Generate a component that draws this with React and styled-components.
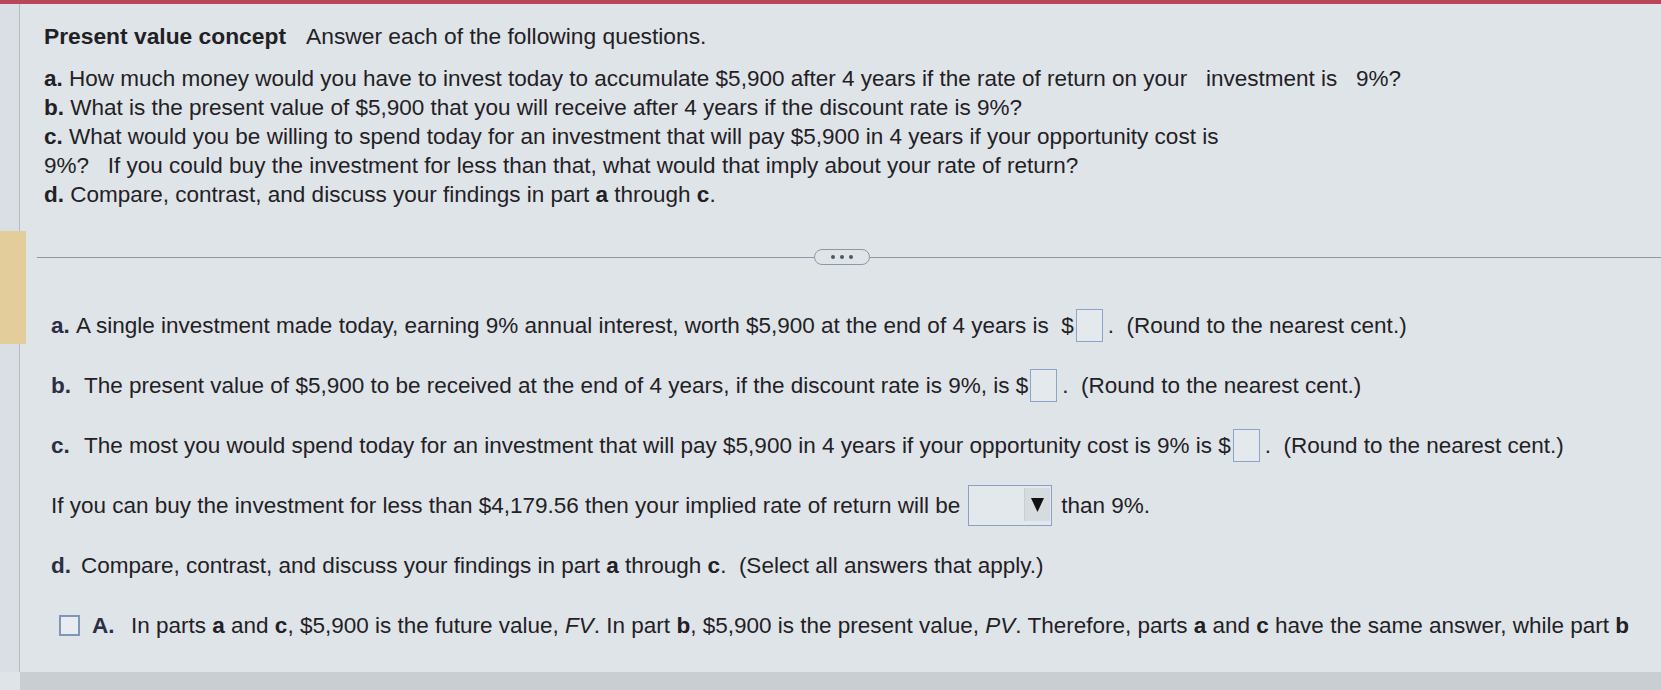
import React from 'react';
import styled, { createGlobalStyle } from 'styled-components';

const GlobalStyle = createGlobalStyle`
  html, body {
    margin: 0;
    padding: 0;
    background: #dfe4e9;
  }
  body {
    font-family: "Liberation Sans", Arial, sans-serif;
    color: #1f2124;
  }
`;

const Page = styled.div`
  width: 1661px;
  height: 690px;
  display: flex;
  flex-direction: column;
  overflow: hidden;
  background: #dfe4e9;
`;

const TopBar = styled.div`
  height: 4px;
  background: #b9475a;
  flex: none;
`;

const Main = styled.div`
  flex: 1;
  display: flex;
  min-height: 0;
`;

const Gutter = styled.div`
  width: 19px;
  flex: none;
  border-right: 1px solid #b3bcc5;
  background: #d9dfe4;
  padding-top: 227px;
`;

const Marker = styled.div`
  width: 26px;
  height: 113px;
  background: #e2cd9b;
`;

const Content = styled.div`
  flex: 1;
  padding: 18px 0 0 24px;
  font-size: 22.5px;
  line-height: 29px;
`;

const Title = styled.div`
  font-size: 22.8px;
  margin-bottom: 13px;
`;

const Bold = styled.span`
  font-weight: 700;
`;

const Gap = styled.span`
  display: inline-block;
  width: ${(p) => p.w || 18}px;
`;

const Questions = styled.div`
  display: flex;
  flex-direction: column;
`;

const Divider = styled.div`
  display: flex;
  align-items: center;
  margin: 40px 0 0 -7px;
  &::before,
  &::after {
    content: '';
    height: 1px;
    background: #8e99a6;
  }
  &::before {
    width: 777px;
  }
  &::after {
    flex: 1;
  }
`;

const Pill = styled.div`
  width: 56px;
  height: 16px;
  border: 1px solid #8e99a6;
  border-radius: 9px;
  display: flex;
  align-items: center;
  justify-content: center;
  gap: 5px;
  box-sizing: border-box;
  span {
    width: 4px;
    height: 4px;
    border-radius: 50%;
    background: #4d5866;
  }
`;

const Answers = styled.div`
  display: flex;
  flex-direction: column;
  gap: 31px;
  padding: 46px 0 0 7px;
`;

const Row = styled.div`
  display: flex;
  align-items: center;
  white-space: nowrap;
  height: 29px;
`;

const Label = styled.span`
  font-weight: 700;
  color: #2a2f45;
  width: ${(p) => p.w || 33}px;
  flex: none;
`;

const Input = styled.span`
  display: inline-block;
  width: 27px;
  height: 33px;
  border: 1.5px solid #8ea3c8;
  background: #e4e9ed;
  margin: 0 5px 0 2px;
  box-sizing: border-box;
`;

const Select = styled.span`
  display: inline-flex;
  width: 84px;
  height: 41px;
  border: 1.5px solid #8c9fc5;
  background: #e3e8ec;
  margin: 0 9px 0 8px;
  box-sizing: border-box;
  justify-content: flex-end;
  padding: 2px 1px 4px 0;
`;

const Arrow = styled.span`
  width: 25px;
  background: #d6dbdf;
  display: flex;
  align-items: center;
  justify-content: center;
  border-left: 1px solid #c8ced3;
  svg {
    width: 13px;
    height: 14px;
  }
`;

const Check = styled.span`
  width: 21px;
  height: 21px;
  border: 2px solid #7f96bb;
  background: #e8ecf0;
  box-sizing: border-box;
  margin: 0 12px 0 8px;
  flex: none;
`;

const Italic = styled.i``;

const Bottom = styled.div`
  height: 18px;
  flex: none;
  background: #c9ced3;
  margin-left: 20px;
`;

export default function App() {
  return (
    <>
      <GlobalStyle />
      <Page>
        <TopBar />
        <Main>
          <Gutter>
            <Marker />
          </Gutter>
          <Content>
            <Title>
              <Bold>Present value concept</Bold>
              <Gap w={20} />
              Answer each of the following questions.
            </Title>
            <Questions>
              <div>
                <Bold>a.</Bold> How much money would you have to invest today to accumulate $5,900 after 4 years if the rate of return on your&nbsp;&nbsp; investment is&nbsp;&nbsp; 9%?
              </div>
              <div>
                <Bold>b.</Bold> What is the present value of $5,900 that you will receive after 4 years if the discount rate is 9%?
              </div>
              <div>
                <Bold>c.</Bold> What would you be willing to spend today for an investment that will pay $5,900 in 4 years if your opportunity cost is
              </div>
              <div>
                9%?&nbsp;&nbsp; If you could buy the investment for less than that, what would that imply about your rate of return?
              </div>
              <div>
                <Bold>d.</Bold> Compare, contrast, and discuss your findings in part <Bold>a</Bold> through <Bold>c</Bold>.
              </div>
            </Questions>
            <Divider>
              <Pill>
                <span />
                <span />
                <span />
              </Pill>
            </Divider>
            <Answers>
              <Row>
                <Label w={25}>a.</Label>
                A single investment made today, earning 9% annual interest, worth $5,900 at the end of 4 years is&nbsp; $
                <Input />.&nbsp; (Round to the nearest cent.)
              </Row>
              <Row>
                <Label>b.</Label>
                The present value of $5,900 to be received at the end of 4 years, if the discount rate is 9%, is $
                <Input />.&nbsp; (Round to the nearest cent.)
              </Row>
              <Row>
                <Label>c.</Label>
                The most you would spend today for an investment that will pay $5,900 in 4 years if your opportunity cost is 9% is $
                <Input />.&nbsp; (Round to the nearest cent.)
              </Row>
              <Row>
                If you can buy the investment for less than $4,179.56 then your implied rate of return will be
                <Select>
                  <Arrow>
                    <svg viewBox="0 0 13 14">
                      <path d="M0 0 H13 L6.5 14 Z" fill="#111" />
                    </svg>
                  </Arrow>
                </Select>
                than 9%.
              </Row>
              <Row>
                <Label w={30}>d.</Label>
                Compare, contrast, and discuss your findings in part&nbsp;<Bold>a</Bold>&nbsp;through&nbsp;<Bold>c</Bold>.&nbsp; (Select all answers that apply.)
              </Row>
              <Row>
                <Check />
                <Label w={39}>A.</Label>
                In parts&nbsp;<Bold>a</Bold>&nbsp;and&nbsp;<Bold>c</Bold>, $5,900 is the future value,&nbsp;<Italic>FV</Italic>. In part&nbsp;<Bold>b</Bold>, $5,900 is the present value,&nbsp;<Italic>PV</Italic>. Therefore, parts&nbsp;<Bold>a</Bold>&nbsp;and&nbsp;<Bold>c</Bold>&nbsp;have the same answer, while part&nbsp;<Bold>b</Bold>
              </Row>
            </Answers>
          </Content>
        </Main>
        <Bottom />
      </Page>
    </>
  );
}
